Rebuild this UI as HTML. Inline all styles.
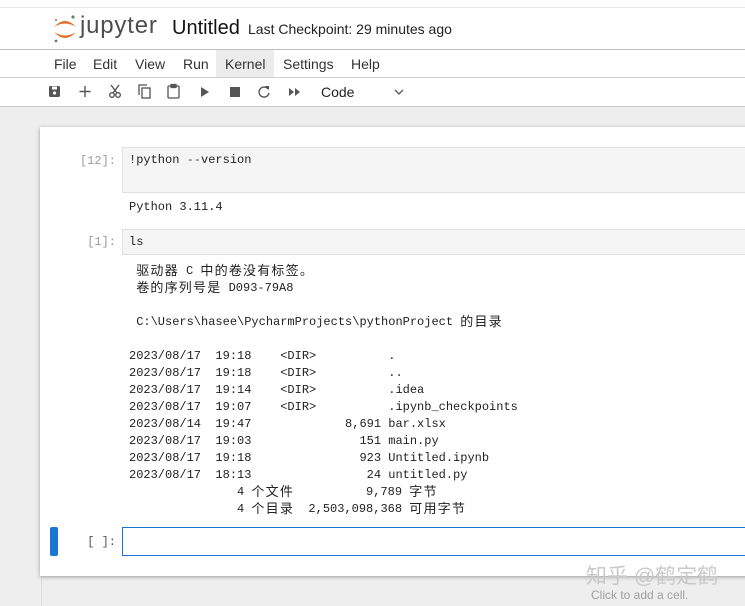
<!DOCTYPE html>
<html><head><meta charset="utf-8"><style>
*{margin:0;padding:0;box-sizing:border-box}
body{width:745px;height:606px;overflow:hidden;background:#eeeeee;font-family:"Liberation Sans","Noto Sans CJK SC",sans-serif;position:relative}
.top{position:absolute;left:0;top:0;width:745px;height:107px;background:#fff;border-bottom:1px solid #c8c8c8}
.l7{position:absolute;left:0;top:7px;width:745px;height:1px;background:#e8e8e8}
.l49{position:absolute;left:0;top:49px;width:745px;height:1px;background:#bdbdbd}
.l77{position:absolute;left:0;top:77px;width:745px;height:1px;background:#d0d0d0}
.abs{position:absolute;white-space:nowrap}
.menu span{position:absolute;top:56px;font-size:14px;color:#333}
.kern{position:absolute;left:216px;top:50px;width:58px;height:27px;background:#ececec}
.nb{position:absolute;left:40px;top:127px;width:710px;height:449px;background:#fff;box-shadow:0 1px 4px rgba(0,0,0,.35)}
.mono{font-family:"Liberation Mono","Noto Sans CJK SC",monospace;font-size:12px}
.inp{position:absolute;left:122px;width:630px;background:#f5f5f5;border:1px solid #e0e0e0}
.pr{position:absolute;color:#9a9a9a;text-align:right;width:60px}
pre{font-family:"Liberation Mono","Noto Sans CJK SC",monospace;font-size:12px;line-height:17px;color:#222;white-space:pre !important}
pre b{font-weight:normal;font-size:13px;letter-spacing:1.2px;display:inline-block;height:17px;line-height:17px;vertical-align:top}
</style></head><body>
<div class="top"></div>
<div class="l7"></div><div class="l49"></div><div class="l77"></div>
<svg class="abs" style="left:51px;top:13px" width="28" height="32" viewBox="0 0 28 32">
<path d="M3 14 Q14 2 25 14 Q14 7 3 14Z" fill="#e66b27"/>
<path d="M3 19 Q14 31 25 19 Q14 26 3 19Z" fill="#e66b27"/>
<circle cx="22" cy="4" r="1.6" fill="#767677"/><circle cx="5" cy="7" r="1" fill="#767677"/><circle cx="5" cy="28" r="1.4" fill="#767677"/>
</svg>
<div class="abs" style="left:80px;top:12px;font-size:24px;color:#4e4e4e;letter-spacing:.8px">jupyter</div>
<div class="abs" style="left:172px;top:17px;font-size:20px;color:#111">Untitled</div>
<div class="abs" style="left:248px;top:21px;font-size:14px;color:#222">Last Checkpoint: 29 minutes ago</div>
<div class="kern"></div>
<div class="menu"><span style="left:54px">File</span><span style="left:93px">Edit</span><span style="left:135px">View</span><span style="left:183px">Run</span><span style="left:225px">Kernel</span><span style="left:283px">Settings</span><span style="left:351px">Help</span></div>
<svg class="abs" style="left:46px;top:83px" width="370" height="18" viewBox="0 0 370 18" fill="#555" stroke="#555">
<rect x="3" y="3" width="11" height="11" rx="1.5" stroke="none"/><rect x="6" y="3.5" width="5" height="3" fill="#fff" stroke="none"/><circle cx="8.5" cy="10" r="1.6" fill="#fff" stroke="none"/>
<path d="M39 3v11M33.5 8.5h11" stroke-width="1.4" fill="none"/>
<g fill="none" stroke-width="1.4"><circle cx="66" cy="12" r="2.3"/><circle cx="72" cy="12" r="2.3"/><path d="M67 10L73 2M71 10L65 2"/></g>
<g fill="none" stroke-width="1.3"><rect x="96" y="5" width="8" height="10"/><path d="M93 12V2h8"/></g>
<g fill="none" stroke-width="1.3"><rect x="122" y="3" width="11" height="12" rx="1"/><rect x="125" y="1.5" width="5" height="3" fill="#555"/></g>
<path d="M155 4l8 5-8 5z" stroke="none"/>
<rect x="184" y="4" width="10" height="10" stroke="none"/>
<path d="M222 6a5 5 0 1 0 1 4" fill="none" stroke-width="1.4"/><path d="M219 3l4 0 0 4z" stroke="none"/>
<path d="M243 5l5 4-5 4zM249 5l5 4-5 4z" stroke="none"/>
<path d="M349 7l4 4 4-4" fill="none" stroke-width="1.3"/>
</svg>
<div class="abs" style="left:321px;top:84px;font-size:14px;color:#222">Code</div>
<div class="abs" style="left:41px;top:576px;width:1px;height:30px;background:#dcdcdc"></div>
<div class="nb"></div>
<div class="pr mono" style="left:56px;top:154px">[12]:</div>
<div class="inp" style="top:147px;height:46px"></div>
<div class="abs mono" style="left:129px;top:153px;color:#222">!python <span style="color:#555">--</span>version</div>
<div class="abs mono" style="left:129px;top:200px;color:#222">Python 3.11.4</div>
<div class="pr mono" style="left:56px;top:235px">[1]:</div>
<div class="inp" style="top:229px;height:26px"></div>
<div class="abs mono" style="left:129px;top:235px;color:#222">ls</div>
<pre class="abs" style="left:129px;top:263px"> <b>驱动器</b> C <b>中的卷没有标签。</b>
 <b>卷的序列号是</b> D093-79A8

 C:\Users\hasee\PycharmProjects\pythonProject <b>的目录</b>

2023/08/17  19:18    &lt;DIR&gt;          .
2023/08/17  19:18    &lt;DIR&gt;          ..
2023/08/17  19:14    &lt;DIR&gt;          .idea
2023/08/17  19:07    &lt;DIR&gt;          .ipynb_checkpoints
2023/08/14  19:47             8,691 bar.xlsx
2023/08/17  19:03               151 main.py
2023/08/17  19:18               923 Untitled.ipynb
2023/08/17  18:13                24 untitled.py
               4 <b>个文件</b>          9,789 <b>字节</b>
               4 <b>个目录</b>  2,503,098,368 <b>可用字节</b></pre>
<div class="abs" style="left:50px;top:527px;width:8px;height:29px;background:#1976d2;border-radius:2px"></div>
<div class="pr mono" style="left:56px;top:535px;color:#555">[ ]:</div>
<div class="abs" style="left:122px;top:527px;width:630px;height:29px;border:1px solid #1976d2;background:#fff"></div>
<div class="abs" style="left:586px;top:560px;font-size:21px;color:#c9c9c9">知乎 @鹤定鹤</div>
<div class="abs" style="left:591px;top:588px;font-size:12px;color:#a0a0a0">Click to add a cell.</div>
</body></html>
